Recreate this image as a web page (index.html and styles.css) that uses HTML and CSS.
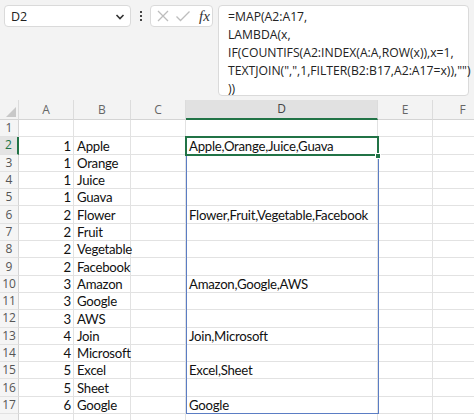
FILE: index.html
```html
<!DOCTYPE html>
<html>
<head>
<meta charset="utf-8">
<link rel="stylesheet" href="styles.css">
</head>
<body>
<div class="toolbar">
  <div class="namebox"><span>D2</span>
    <svg class="chev" width="10" height="6" viewBox="0 0 10 6"><path d="M1.5 1 L5 4.5 L8.5 1" fill="none" stroke="#333" stroke-width="1.6"/></svg>
  </div>
  <div class="dots"><i></i><i></i><i></i></div>
  <div class="fxbox">
    <svg width="14" height="14" viewBox="0 0 14 14"><path d="M2 2 L12 12 M12 2 L2 12" stroke="#bdbdbd" stroke-width="1.3" fill="none"/></svg>
    <svg width="16" height="14" viewBox="0 0 16 14"><path d="M1.5 7.5 L5.5 11.5 L14.5 2.5" stroke="#bdbdbd" stroke-width="1.3" fill="none"/></svg>
    <span class="fx">fx</span>
  </div>
  <div class="formula">=MAP(A2:A17,<br>LAMBDA(x,<br>IF(COUNTIFS(A2:INDEX(A:A,ROW(x)),x=1,<br>TEXTJOIN(",",1,FILTER(B2:B17,A2:A17=x)),"")<br>))</div>
</div>
<div class="sheet">
  <div class="r hdr"><div class="corner"><svg width="10" height="10" viewBox="0 0 10 10"><path d="M10 0 L10 10 L0 10 Z" fill="#c8c8c8"/></svg></div><div>A</div><div>B</div><div>C</div><div class="sel">D</div><div>E</div><div>F</div></div>
  <div class="r"><div class="h">1</div><div class="n"></div><div></div><div></div><div></div><div></div><div></div></div>
  <div class="r"><div class="h hs">2</div><div class="n">1</div><div>Apple</div><div></div><div>Apple,Orange,Juice,Guava</div><div></div><div></div></div>
  <div class="r"><div class="h">3</div><div class="n">1</div><div>Orange</div><div></div><div></div><div></div><div></div></div>
  <div class="r"><div class="h">4</div><div class="n">1</div><div>Juice</div><div></div><div></div><div></div><div></div></div>
  <div class="r"><div class="h">5</div><div class="n">1</div><div>Guava</div><div></div><div></div><div></div><div></div></div>
  <div class="r"><div class="h">6</div><div class="n">2</div><div>Flower</div><div></div><div>Flower,Fruit,Vegetable,Facebook</div><div></div><div></div></div>
  <div class="r"><div class="h">7</div><div class="n">2</div><div>Fruit</div><div></div><div></div><div></div><div></div></div>
  <div class="r"><div class="h">8</div><div class="n">2</div><div>Vegetable</div><div></div><div></div><div></div><div></div></div>
  <div class="r"><div class="h">9</div><div class="n">2</div><div>Facebook</div><div></div><div></div><div></div><div></div></div>
  <div class="r"><div class="h">10</div><div class="n">3</div><div>Amazon</div><div></div><div>Amazon,Google,AWS</div><div></div><div></div></div>
  <div class="r"><div class="h">11</div><div class="n">3</div><div>Google</div><div></div><div></div><div></div><div></div></div>
  <div class="r"><div class="h">12</div><div class="n">3</div><div>AWS</div><div></div><div></div><div></div><div></div></div>
  <div class="r"><div class="h">13</div><div class="n">4</div><div>Join</div><div></div><div>Join,Microsoft</div><div></div><div></div></div>
  <div class="r"><div class="h">14</div><div class="n">4</div><div>Microsoft</div><div></div><div></div><div></div><div></div></div>
  <div class="r"><div class="h">15</div><div class="n">5</div><div>Excel</div><div></div><div>Excel,Sheet</div><div></div><div></div></div>
  <div class="r"><div class="h">16</div><div class="n">5</div><div>Sheet</div><div></div><div></div><div></div><div></div></div>
  <div class="r"><div class="h">17</div><div class="n">6</div><div>Google</div><div></div><div>Google</div><div></div><div></div></div>
  <div class="r"><div class="h"></div><div class="n"></div><div></div><div></div><div></div><div></div><div></div></div>
  <div class="spill"></div>
  <div class="active"></div>
  <div class="handle"></div>
</div>
</body>
</html>
```
FILE: styles.css
```css
* { box-sizing: border-box; }
html, body { margin: 0; padding: 0; }
body {
  width: 474px;
  height: 420px;
  overflow: hidden;
  background: #f3f3f3;
  font-family: "Open Sans", "Noto Sans", sans-serif;
  color: #222;
}
.toolbar {
  display: flex;
  align-items: flex-start;
  padding: 5px 0 0 4px;
  height: 100px;
}
.namebox {
  width: 127px;
  height: 22px;
  background: #fff;
  border: 1px solid #dadada;
  border-radius: 4px;
  display: flex;
  align-items: center;
  justify-content: space-between;
  padding: 0 5px 0 6px;
  font-size: 12.5px;
  color: #222;
}
.chev { margin-top: 1px; }
.dots {
  width: 19px;
  height: 22px;
  display: flex;
  flex-direction: column;
  align-items: center;
  justify-content: center;
  gap: 2px;
}
.dots i {
  display: block;
  width: 2px;
  height: 2px;
  background: #444;
}
.fxbox {
  width: 63px;
  height: 22px;
  background: #fff;
  border: 1px solid #dadada;
  border-radius: 4px;
  display: flex;
  align-items: center;
  padding: 0 0 0 5px;
  gap: 5px;
}
.fx {
  font-family: "Liberation Serif", "DejaVu Serif", serif;
  font-style: italic;
  font-size: 15px;
  color: #333;
  margin-left: 3px;
}
.formula {
  margin-left: 5px;
  width: 251px;
  height: 91px;
  background: #fff;
  border: 1px solid #dadada;
  border-radius: 4px;
  padding: 2px 0 0 9px;
  font-size: 12.2px;
  line-height: 18px;
  color: #222;
  white-space: nowrap;
}
.sheet {
  position: relative;
  background: #fff;
  font-family: "Lato", "Open Sans", sans-serif;
  font-size: 13.2px;
  letter-spacing: -0.25px;
}
.r {
  display: grid;
  grid-template-columns: 19px 55px 57px 55px 192px 55px 60px;
  height: 17.3px;
}
.r > div {
  border-right: 1px solid #e2e2e2;
  border-bottom: 1px solid #e2e2e2;
  display: flex;
  align-items: flex-end;
  padding: 0 2px 0 3px;
  line-height: 16px;
  white-space: nowrap;
  overflow: visible;
  color: #111;
}
.r > div.n { justify-content: flex-end; padding-right: 2px; }
.r > div.h {
  background: #f5f5f5;
  border-right: 1px solid #d4d4d4;
  border-bottom: 1px solid #e2e2e2;
  justify-content: center;
  align-items: center;
  padding: 0;
  color: #555;
  font-family: "Open Sans", sans-serif;
  font-size: 12px;
  letter-spacing: 0;
}
.r > div.hs {
  background: #e4e4e4;
  border-right: 2px solid #217346;
  color: #217346;
}
.r.hdr { height: 20px; }
.r.hdr > div {
  background: #f3f3f3;
  border-right: 1px solid #dcdcdc;
  border-bottom: 1px solid #d4d4d4;
  justify-content: center;
  align-items: center;
  color: #666;
  font-family: "Open Sans", sans-serif;
  font-size: 12px;
  letter-spacing: 0;
  padding: 0;
}
.r.hdr > div.corner {
  justify-content: flex-end;
  align-items: flex-end;
  padding: 0 2px 2px 0;
}
.r.hdr > div.sel {
  background: #e1e1e1;
  border-bottom: 2px solid #217346;
  color: #444;
}
.spill {
  position: absolute;
  left: 186px;
  top: 37px;
  width: 193px;
  height: 277px;
  border: 1px solid #5b7dc4;
  pointer-events: none;
}
.active {
  position: absolute;
  left: 185px;
  top: 36px;
  width: 194px;
  height: 20px;
  border: 2px solid #217346;
}
.handle {
  position: absolute;
  left: 375px;
  top: 53px;
  width: 6px;
  height: 6px;
  background: #217346;
  border: 1px solid #fff;
}
```
